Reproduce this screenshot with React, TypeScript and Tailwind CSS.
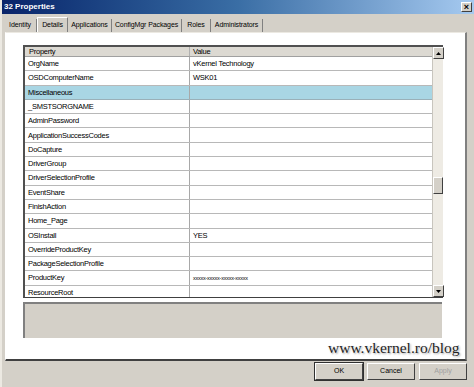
const tabs = [
  { label: 'Identity', w: 'w-[33px]' },
  { label: 'Details', w: 'w-[31px]', active: true },
  { label: 'Applications', w: 'w-[44px]' },
  { label: 'ConfigMgr Packages', w: 'w-[70px]' },
  { label: 'Roles', w: 'w-[29px]' },
  { label: 'Administrators', w: 'w-[52px]' },
];

const rows: { name: string; value?: string; selected?: boolean }[] = [
  { name: 'OrgName', value: 'vKernel Technology' },
  { name: 'OSDComputerName', value: 'WSK01' },
  { name: 'Miscellaneous', selected: true },
  { name: '_SMSTSORGNAME' },
  { name: 'AdminPassword' },
  { name: 'ApplicationSuccessCodes' },
  { name: 'DoCapture' },
  { name: 'DriverGroup' },
  { name: 'DriverSelectionProfile' },
  { name: 'EventShare' },
  { name: 'FinishAction' },
  { name: 'Home_Page' },
  { name: 'OSInstall', value: 'YES' },
  { name: 'OverrideProductKey' },
  { name: 'PackageSelectionProfile' },
  { name: 'ProductKey', value: 'xxxxx-xxxxx-xxxxx-xxxxx' },
  { name: 'ResourceRoot' },
];

const ScrollButton = ({ down }: { down?: boolean }) => (
  <div className="h-[12px] w-[11px] bg-[#d4d0c8] border border-t-white border-l-white border-r-[#404040] border-b-[#404040] flex items-center justify-center">
    <svg width="5" height="3" viewBox="0 0 5 3">
      <path d={down ? 'M0 0h5L2.5 3z' : 'M2.5 0L5 3H0z'} fill="#000" />
    </svg>
  </div>
);

export default function App() {
  return (
    <div
      className="relative w-[474px] h-[387px] overflow-hidden bg-[#d4d0c8] border-l-2 border-l-[#ece9e2] text-black"
      style={{ fontFamily: '"Liberation Sans", Arial, sans-serif' }}
    >
      {/* title bar */}
      <div className="h-[14px] flex items-center justify-between pl-[2px] pr-[2px] bg-gradient-to-r from-[#0a246a] via-[#3a6ea5] to-[#a6caf0]">
        <span className="text-white font-bold text-[8px] leading-none">32 Properties</span>
        <div className="w-[11px] h-[10px] bg-[#d4d0c8] border border-t-white border-l-white border-r-[#404040] border-b-[#404040] flex items-center justify-center text-[9px] font-bold leading-none">
          ×
        </div>
      </div>

      {/* tabs */}
      <div className="flex items-end h-[18px] pl-[2px] text-[7px] tracking-[-0.1px]">
        {tabs.map((t) => (
          <div
            key={t.label}
            className={`${t.w} flex items-center justify-center border-r border-r-[#808080] ${
              t.active
                ? 'h-[15px] border-l border-l-white bg-[#d4d0c8] border-t border-t-white'
                : 'h-[13px] bg-[#d4d0c8]'
            }`}
          >
            {t.label}
          </div>
        ))}
      </div>

      {/* tab panel */}
      <div className="ml-[3px] w-[462px] h-[329px] bg-white border-l border-t border-l-[#ffffff] border-t-[#ece9e2] border-r-2 border-b-2 border-r-[#808080] border-b-[#404040] pl-[17px] pt-[12px]">
        <div className="w-[420px] h-[253px] flex border-t-2 border-l-2 border-t-[#505050] border-l-[#505050] border-b border-b-[#404040]">
          <div className="w-[407px] overflow-hidden text-[7.5px] tracking-[-0.25px]">
            <div className="h-[10px] flex bg-[#dcd9d2] border-b border-b-[#a0a0a0]">
              <div className="w-[165px] pl-[4px] flex items-center border-r border-r-[#b0b0b0]">Property</div>
              <div className="flex-1 pl-[3px] flex items-center">Value</div>
            </div>
            {rows.map((r) => (
              <div
                key={r.name}
                className={`h-[14.3px] flex border-b ${
                  r.selected ? 'bg-[#a9d6e4] border-b-[#9ab0b8]' : 'border-b-[#b8b8b8]'
                }`}
              >
                <div className="w-[165px] pl-[3px] flex items-center border-r border-r-[#a8a8a8]">{r.name}</div>
                <div className={`flex-1 pl-[3px] flex items-center ${r.value?.startsWith('x') ? 'text-[5.5px]' : ''}`}>
                  {r.value}
                </div>
              </div>
            ))}
          </div>
          {/* scrollbar */}
          <div className="w-[11px] flex flex-col bg-[#eeebe4] border-l border-l-[#c8c5be]">
            <ScrollButton />
            <div className="flex-1 flex flex-col pt-[118px]">
              <div className="h-[17px] bg-[#d4d0c8] border border-t-white border-l-white border-r-[#404040] border-b-[#404040]" />
            </div>
            <ScrollButton down />
          </div>
        </div>
        <div className="mt-[4px] w-[419px] h-[36px] bg-[#d4d0c8] border-t-2 border-l-2 border-t-[#808080] border-l-[#808080]" />
      </div>

      {/* buttons */}
      <div className="flex justify-end gap-[4px] pr-[7px] pt-[2px] text-[7px]">
        {['OK', 'Cancel', 'Apply'].map((b) => (
          <div
            key={b}
            className={`w-[48px] h-[17px] flex items-center justify-center bg-[#d4d0c8] border border-t-white border-l-white border-r-[#404040] border-b-[#404040] ${
              b === 'OK' ? 'outline outline-1 outline-[#303030]' : ''
            } ${b === 'Apply' ? 'text-[#a0a0a0]' : ''}`}
          >
            {b}
          </div>
        ))}
      </div>

      {/* watermark */}
      <div
        className="absolute left-[326px] top-[336px] text-[15.5px] text-[#222] [text-shadow:0_0_2px_#fff,0_0_3px_#fff,1px_1px_2px_#888]"
        style={{ fontFamily: '"Liberation Serif", "Times New Roman", serif' }}
      >
        www.vkernel.ro/blog
      </div>
    </div>
  );
}
